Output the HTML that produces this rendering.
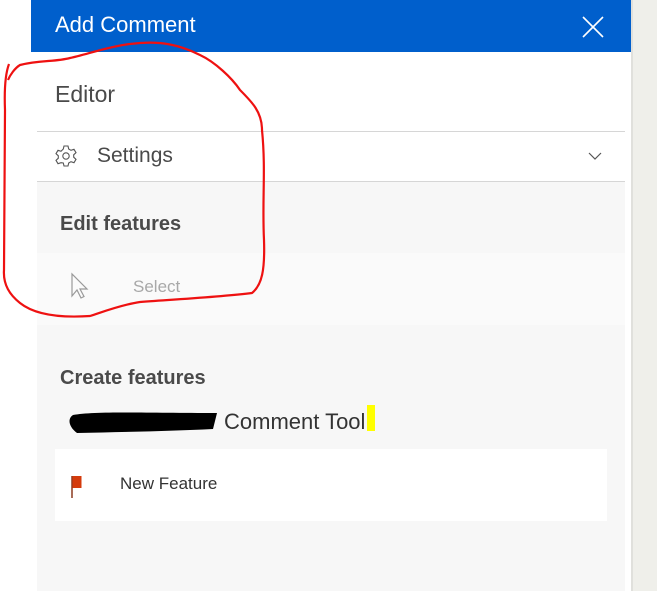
<!DOCTYPE html>
<html><head><style>
body{margin:0;width:657px;height:591px;position:relative;overflow:hidden;background:#fff;font-family:"Liberation Sans",sans-serif;color:#323232}
div{position:absolute}
.t{white-space:nowrap}
</style></head><body>
<div style="left:631px;top:0;width:26px;height:591px;background:#efefea"></div>
<div style="left:631px;top:0;width:2px;height:591px;background:#e0e0dc"></div>
<div style="left:31px;top:0;width:600px;height:52px;background:#005fcc"></div>
<div class="t" style="left:55px;top:12px;font-size:22px;color:#fff">Add Comment</div>
<svg style="position:absolute;left:582px;top:16px" width="22" height="22"><path d="M1 1L21 21M21 1L1 21" stroke="#fff" stroke-width="1.6" fill="none"/></svg>
<div class="t" style="left:55px;top:81px;font-size:23px;color:#4a4a4a">Editor</div>
<div style="left:37px;top:131px;width:588px;height:1px;background:#d6d6d6"></div>
<svg style="position:absolute;left:54px;top:144px" width="24" height="24" viewBox="0 0 24 24"><path d="M10 2h4l.7 3 2.3 1.3 3-1 2 3.4-2.3 2.1v2.4l2.3 2.1-2 3.4-3-1-2.3 1.3-.7 3h-4l-.7-3L7 18.7l-3 1-2-3.4 2.3-2.1v-2.4L2 9.7l2-3.4 3 1L9.3 5z" fill="none" stroke="#555" stroke-width="1.1"/><circle cx="12" cy="12" r="3.2" fill="none" stroke="#555" stroke-width="1.1"/></svg>
<div class="t" style="left:97px;top:144px;font-size:21px;color:#4a4a4a">Settings</div>
<svg style="position:absolute;left:588px;top:151px" width="14" height="10"><path d="M1 2l6 6 6-6" stroke="#555" stroke-width="1.2" fill="none"/></svg>
<div style="left:37px;top:181px;width:588px;height:1px;background:#d6d6d6"></div>
<div style="left:37px;top:182px;width:588px;height:409px;background:#f7f7f7"></div>
<div class="t" style="left:60px;top:213px;font-size:20px;font-weight:bold;color:#4a4a4a">Edit features</div>
<div style="left:37px;top:253px;width:588px;height:72px;background:#fafafa"></div>
<svg style="position:absolute;left:70px;top:272px" width="22" height="28"><path d="M2 2v22l5-6 4 8 3-1.5-4-7.5h7z" fill="none" stroke="#999" stroke-width="1.2"/></svg>
<div class="t" style="left:133px;top:277px;font-size:17px;color:#a8a8a8">Select</div>
<div class="t" style="left:60px;top:367px;font-size:20px;font-weight:bold;color:#4a4a4a">Create features</div>
<div class="t" style="left:224px;top:409px;font-size:22px;color:#333">Comment Tool</div>
<svg style="position:absolute;left:55px;top:405px" width="170" height="30"><path d="M18 10C40 6 90 8 162 8L158 24C120 26 70 27 22 28C14 22 12 14 18 10Z" fill="#000"/></svg>
<div style="left:367px;top:405px;width:8px;height:26px;background:#ffff00"></div>
<div style="left:55px;top:449px;width:552px;height:72px;background:#fff"></div>
<svg style="position:absolute;left:70px;top:475px" width="14" height="24"><path d="M2 1v22" stroke="#8a3a20" stroke-width="1.5"/><path d="M2.5 1h9v12h-9z" fill="#d43b0c"/></svg>
<div class="t" style="left:120px;top:474px;font-size:17px;color:#333">New Feature</div>
<svg style="position:absolute;left:0;top:0" width="657" height="591"><path d="M9 64C6 72 4 85 5 110C5 170 4 230 4 270C3 285 10 295 20 303C35 315 60 318 90 316C100 313 120 305 140 302C180 299 220 297 252 293C262 285 265 270 264 240C262 200 266 170 262 130C262 112 252 102 240 90C232 78 215 62 200 55C180 45 160 40 130 44C110 46 85 55 70 58C55 62 40 60 20 65C15 68 10 75 8 80" fill="none" stroke="#ee1111" stroke-width="2.2" stroke-linejoin="round"/></svg>
</body></html>
